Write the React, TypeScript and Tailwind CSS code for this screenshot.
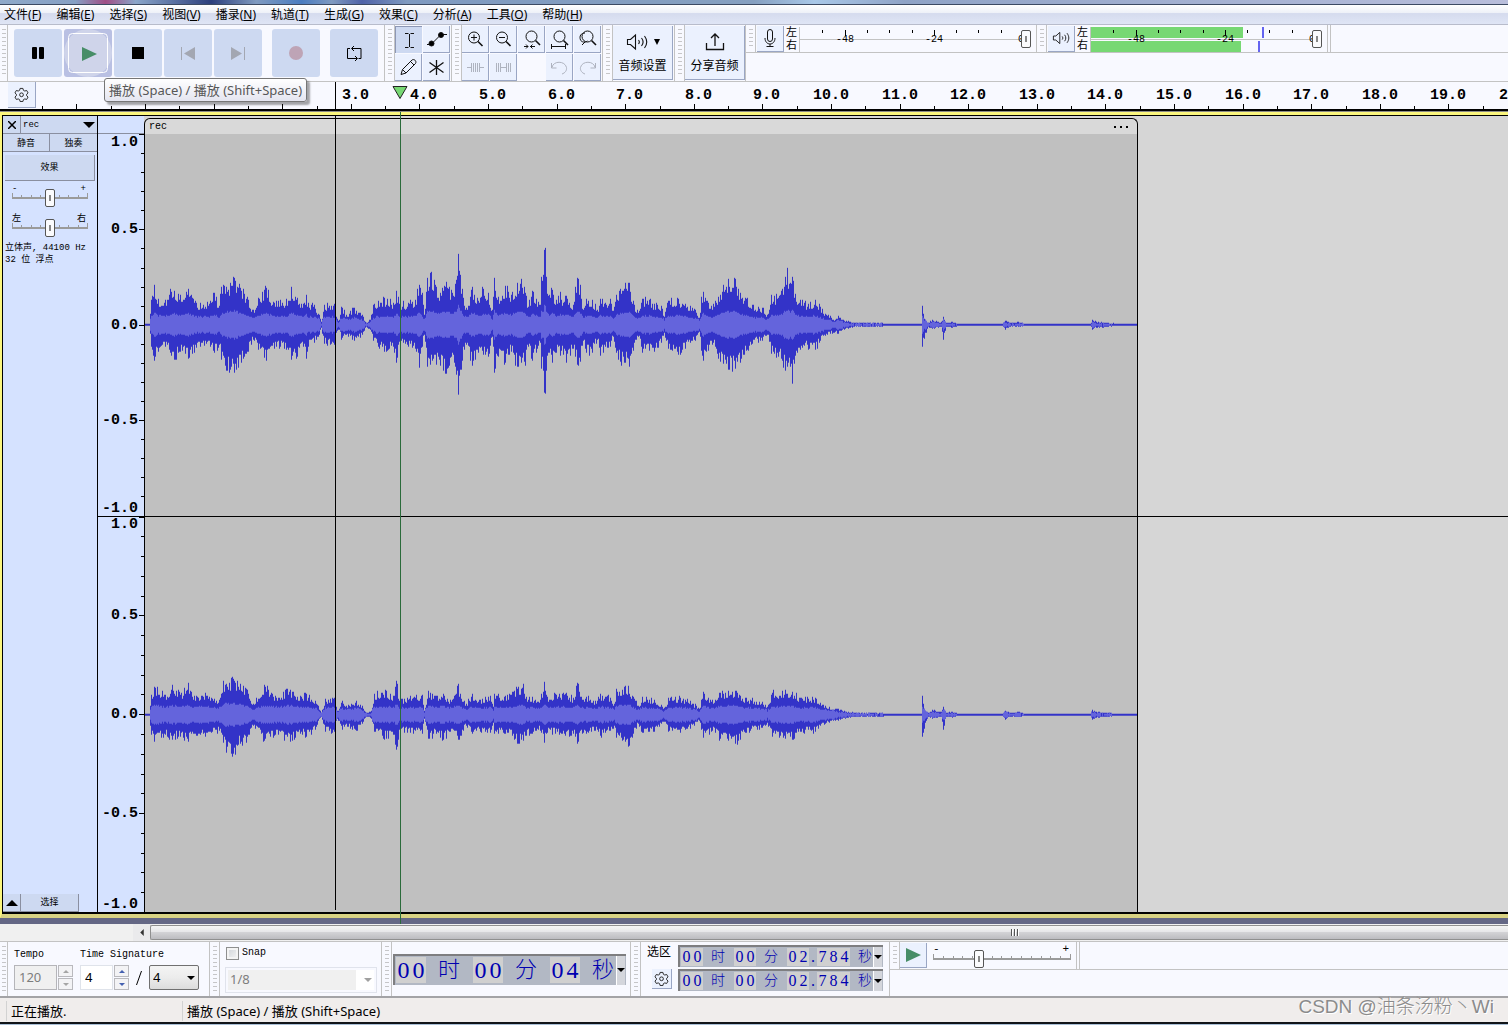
import type { ReactNode } from "react"
import clsx from "clsx"

const PX_PER_SECOND = 68.6
const TIMELINE_START = 145
const CLIP_WIDTH = 992

const MENUS = [
  ["文件", "F"],
  ["编辑", "E"],
  ["选择", "S"],
  ["视图", "V"],
  ["播录", "N"],
  ["轨道", "T"],
  ["生成", "G"],
  ["效果", "C"],
  ["分析", "A"],
  ["工具", "O"],
  ["帮助", "H"],
]

// [x, peak above zero, peak below zero]
type Peak = [number, number, number]

const TAIL: Peak[] = [
  [854, 2, 2], [882, 2, 2], [884, 1, 1], [921, 1, 1], [922, 19, 22], [924, 6, 14],
  [928, 2, 2], [932, 5, 4], [941, 3, 2], [943, 8, 15], [946, 2, 2], [952, 3, 3],
  [958, 1, 1], [1002, 1, 1], [1005, 4, 5], [1010, 2, 2], [1018, 3, 2], [1027, 1, 1],
  [1090, 1, 1], [1092, 5, 5], [1096, 3, 3], [1108, 2, 2], [1116, 1, 1], [1137, 1, 1],
]

const LEFT_PEAKS: Peak[] = [
  [145, 1, 1], [149, 1, 1], [151, 25, 22], [154, 40, 36], [158, 26, 27], [165, 25, 22],
  [170, 36, 28], [174, 34, 35], [180, 30, 27], [188, 36, 34], [194, 22, 28], [200, 22, 22],
  [210, 24, 22], [214, 32, 28], [219, 19, 20], [221, 38, 35], [226, 38, 46], [230, 42, 45],
  [234, 47, 48], [238, 37, 43], [243, 36, 34], [248, 25, 27], [253, 15, 15], [258, 27, 25],
  [266, 37, 36], [274, 22, 24], [280, 25, 22], [288, 24, 25], [291, 38, 35], [297, 27, 32],
  [303, 21, 22], [306, 30, 34], [308, 22, 22], [314, 20, 18], [319, 10, 10], [321, 3, 3],
  [324, 20, 19], [334, 21, 20], [337, 6, 6], [339, 5, 5], [341, 18, 15], [346, 10, 10],
  [354, 17, 16], [362, 10, 10], [366, 2, 2], [370, 5, 5], [373, 20, 16], [378, 24, 22],
  [387, 26, 26], [393, 22, 22], [396, 34, 38], [400, 21, 20], [408, 22, 22], [415, 25, 24],
  [419, 40, 43], [422, 32, 22], [424, 10, 10], [427, 47, 42], [430, 52, 40], [436, 38, 40],
  [440, 32, 41], [446, 43, 49], [452, 32, 28], [456, 45, 50], [458, 71, 70], [460, 50, 45],
  [462, 36, 36], [466, 17, 20], [470, 28, 36], [472, 38, 41], [478, 24, 28], [483, 36, 30],
  [488, 32, 32], [492, 15, 12], [494, 47, 48], [498, 28, 32], [505, 39, 38], [511, 30, 27],
  [517, 42, 42], [521, 46, 38], [525, 32, 41], [528, 18, 22], [532, 34, 36], [540, 20, 18],
  [541, 48, 44], [543, 50, 46], [544, 75, 68], [545, 77, 69], [546, 48, 46], [549, 30, 28],
  [552, 35, 38], [556, 25, 28], [560, 33, 31], [563, 22, 30], [566, 29, 38], [573, 20, 24],
  [575, 38, 32], [577, 47, 40], [580, 40, 37], [583, 15, 16], [586, 26, 28], [592, 25, 28],
  [597, 15, 15], [600, 26, 31], [605, 22, 22], [610, 26, 22], [613, 14, 12], [616, 30, 28],
  [620, 36, 37], [625, 42, 38], [629, 42, 42], [633, 24, 26], [638, 12, 12], [642, 26, 28],
  [649, 25, 26], [654, 21, 27], [661, 19, 18], [664, 8, 8], [668, 24, 24], [678, 26, 30],
  [685, 21, 24], [690, 19, 18], [695, 15, 16], [699, 7, 7], [701, 28, 26], [703, 33, 36],
  [708, 22, 26], [713, 21, 18], [718, 28, 34], [723, 40, 39], [728, 46, 45], [735, 46, 44],
  [740, 32, 38], [747, 27, 25], [752, 20, 19], [762, 17, 16], [767, 10, 10], [771, 30, 29],
  [778, 27, 32], [782, 36, 36], [785, 48, 46], [787, 57, 42], [790, 42, 42], [792, 48, 59],
  [795, 31, 31], [800, 25, 25], [804, 22, 21], [808, 21, 25], [815, 25, 25], [820, 18, 16],
  [825, 11, 11], [830, 9, 9], [833, 5, 8], [838, 9, 9], [842, 5, 5], [848, 4, 4],
  ...TAIL,
]

const RIGHT_PEAKS: Peak[] = [
  [145, 1, 1], [149, 1, 1], [151, 20, 20], [154, 28, 27], [165, 20, 20], [172, 30, 25],
  [180, 20, 22], [188, 32, 27], [194, 19, 19], [205, 22, 22], [219, 15, 16], [223, 34, 28],
  [226, 31, 38], [233, 36, 39], [240, 31, 29], [246, 26, 28], [253, 11, 11], [264, 30, 26],
  [275, 19, 20], [290, 25, 27], [300, 19, 19], [306, 21, 22], [315, 14, 15], [321, 2, 2],
  [325, 16, 17], [334, 17, 17], [337, 4, 4], [342, 14, 15], [348, 10, 12], [356, 14, 16],
  [362, 9, 9], [366, 2, 2], [371, 4, 4], [374, 21, 17], [386, 24, 24], [394, 19, 20],
  [396, 34, 35], [397, 31, 32], [399, 14, 15], [410, 19, 18], [422, 20, 19], [424, 4, 4],
  [428, 24, 24], [436, 19, 19], [443, 21, 25], [450, 15, 17], [458, 31, 25], [460, 21, 21],
  [466, 11, 11], [472, 21, 19], [480, 15, 17], [490, 19, 18], [493, 8, 8], [494, 21, 19],
  [505, 19, 19], [512, 23, 21], [518, 28, 29], [523, 31, 26], [526, 18, 21], [532, 18, 19],
  [540, 15, 16], [544, 33, 28], [547, 18, 18], [555, 21, 19], [565, 21, 21], [573, 17, 19],
  [577, 32, 29], [582, 15, 19], [588, 19, 18], [595, 14, 16], [600, 21, 21], [610, 17, 16],
  [614, 11, 11], [616, 26, 23], [625, 29, 27], [628, 29, 32], [633, 18, 19], [638, 9, 9],
  [642, 18, 18], [654, 15, 17], [664, 7, 7], [668, 17, 17], [680, 17, 18], [690, 14, 14],
  [699, 6, 6], [703, 23, 23], [712, 15, 16], [720, 22, 24], [728, 24, 26], [735, 24, 29],
  [745, 17, 18], [762, 13, 13], [767, 8, 8], [772, 22, 22], [785, 25, 24], [792, 23, 25],
  [800, 17, 17], [815, 17, 17], [825, 9, 9], [838, 6, 6], [848, 3, 3],
  ...TAIL,
]

// small seeded generator so that the wave is the same on every render
function createRandom(seed: number) {
  let state = seed
  return () => {
    state = (state * 1664525 + 1013904223) % 4294967296
    return state / 4294967296
  }
}

function buildWave(peaks: Peak[], middle: number, seed: number) {
  const random = createRandom(seed)
  let peakPath = ""
  let rmsPath = ""
  let i = 0

  for (let x = TIMELINE_START; x < TIMELINE_START + CLIP_WIDTH; x++) {
    while (i < peaks.length - 2 && peaks[i + 1][0] <= x) i++
    const [x0, up0, down0] = peaks[i]
    const [x1, up1, down1] = peaks[i + 1]
    const t = (x - x0) / (x1 - x0)
    const envUp = up0 + (up1 - up0) * t
    const envDown = down0 + (down1 - down0) * t
    const exact = x === x0
    const jitter = () => 0.7 + random() ** 2 * 0.42
    const up = Math.round(exact ? envUp : envUp * jitter())
    const down = Math.round(exact ? envDown : envDown * jitter())
    const left = x - TIMELINE_START + 0.5
    peakPath += `M${left} ${middle - Math.max(up, 1)}V${middle + Math.max(down, 1)}`

    const env = (envUp + envDown) / 2
    const rms = Math.round(Math.min(env * 0.55, 3 + env * 0.23) + random() * 2 - 1)
    if (env > 1.5 && rms > 0) {
      rmsPath += `M${left} ${middle - rms}V${middle + rms}`
    }
  }
  return { peakPath, rmsPath }
}

const LEFT_WAVE = buildWave(LEFT_PEAKS, 191, 7)
const RIGHT_WAVE = buildWave(RIGHT_PEAKS, 198, 29)

function App() {
  return (
    <div className="relative flex h-screen min-h-[600px] flex-col overflow-hidden bg-[#f8f9ff] font-['Noto_Sans','Noto_Sans_CJK_SC',sans-serif] text-xs text-black">
      <div className="h-1 shrink-0 bg-[linear-gradient(90deg,#8fa9c9,#86a0c4_5%,#a04f86_7%,#8aa5c9_9%,#2c3f7c_14%,#7f9ac0_17%,#4a7cc0_20%,#7f9ac0_22%,#4f63a8_24%,#7f9ac0_27%,#86a0c0_50%,#a9c8e8_54%,#8fa3c6_60%,#a9b4d4_85%,#b9bedb)]" />
      <MenuBar />
      <TopToolbar />
      <TimeRuler />
      <TrackArea />
      <div className="h-[6px] shrink-0 bg-[#646785]" />
      <HorizontalScroll />
      <BottomToolbar />
      <StatusBar />
      <div className="h-[3px] shrink-0 border-t-2 border-[#101418] bg-[#a9bfd6]" />
      <div className="absolute right-[14px] bottom-[6px] font-['Liberation_Sans','Noto_Sans_CJK_SC',sans-serif] text-[19px] leading-6 font-light text-[#8b8b8b] [text-shadow:1px_1px_0_#ffffff]">
        CSDN @油条汤粉丶Wi
      </div>
    </div>
  )
}

function MenuBar() {
  return (
    <nav className="flex h-[21px] shrink-0 items-center gap-[15px] border-t border-b border-t-[#3c4a63] border-b-[#b8bccb] bg-[linear-gradient(#ffffff,#eef1f8_40%,#d5dbee_45%,#dfe5f5)] pl-1">
      {MENUS.map(([name, key]) => (
        <button key={key} className="leading-4 whitespace-nowrap">
          {name}(<span className="underline">{key}</span>)
        </button>
      ))}
    </nav>
  )
}

function Grabber({ first = false }: { first?: boolean }) {
  return (
    <div
      className={clsx(
        "flex shrink-0 justify-center border-[#c3c3c3] py-1",
        first ? "w-2 border-r" : "w-[11px] border-x",
      )}
    >
      <div className="w-1 bg-[repeating-linear-gradient(#c6c6c8_0_1px,transparent_1px_4px)]" />
    </div>
  )
}

function TopToolbar() {
  return (
    <div className="flex h-[57px] shrink-0 border-b border-[#c3c3c3]">
      <Grabber first />
      <Transport />
      <Grabber />
      <div className="grid shrink-0 grid-cols-2 gap-px py-px pr-px">
        <ToolButton label="选择工具" active>
          <path d="M9 6.500h3.500M14.500 6.500H18M9 20.500h3.500M14.500 20.500H18M13.500 7v13" />
        </ToolButton>
        <ToolButton label="包络工具">
          <path d="M4 18.500h4L18 8.500h6" />
          <circle cx="8.500" cy="17.500" r="2.500" fill="#000" />
          <circle cx="18" cy="9" r="2.500" fill="#000" />
        </ToolButton>
        <ToolButton label="绘制工具">
          <path d="M6 20.500l1.500-5L17 6c2-1.500 5 1 3.500 3.500L11 19zM15.500 7.500l3.500 3.500M7.500 15.500l3.500 3.500" />
        </ToolButton>
        <ToolButton label="多功能工具">
          <path d="M13.500 6v15M6.500 8.500l14 10M20.500 8.500l-14 10" strokeWidth="1.300" />
        </ToolButton>
      </div>
      <Grabber />
      <div className="grid shrink-0 grid-cols-5 gap-px py-px pr-px">
        <ToolButton label="放大">
          <Magnifier />
          <path d="M9 11.500h6M12 8.500v6" />
        </ToolButton>
        <ToolButton label="缩小">
          <Magnifier />
          <path d="M9 11.500h6" />
        </ToolButton>
        <ToolButton label="适应选区">
          <Magnifier shift />
          <path d="M6 20.500h4M12 20.500h5M8 18.500l2 2-2 2M14.500 18.500l-2 2 2 2" />
        </ToolButton>
        <ToolButton label="适应项目">
          <Magnifier shift />
          <path d="M5.500 20.500h14M5.500 18v5M19.500 18v5" />
        </ToolButton>
        <ToolButton label="缩放切换">
          <Magnifier shift />
          <path d="M11 7c-4 0-6 3-4.500 7 1 2 4 3 7 1M11 16l-3 3" />
        </ToolButton>
        <ToolButton label="修剪音频" disabled>
          <path d="M5 13.500h4M18 13.500h4M9.500 9v9M11.500 9v9M13.500 9v9M15.500 9v9M17.500 9v9" />
        </ToolButton>
        <ToolButton label="静音音频" disabled>
          <path d="M6.500 9v9M8.500 9v9M10.500 9v9M10.500 13.500h6M16.500 9v9M18.500 9v9M20.500 9v9" />
        </ToolButton>
        <div />
        <ToolButton label="撤销" disabled>
          <path d="M6 13.500c1-7 13-7 14.500 0 .5 3-1.500 5.500-4.500 6.500M5.500 9v5h5" />
        </ToolButton>
        <ToolButton label="重做" disabled>
          <path d="M21 13.500c-1-7-13-7-14.500 0-.5 3 1.500 5.500 4.500 6.500M21.500 9v5h-5" />
        </ToolButton>
      </div>
      <Grabber />
      <div className="flex shrink-0 py-px pr-px">
        <LargeButton label="音频设置">
          <SpeakerIcon className="h-5 w-[22px]" />
          <svg viewBox="0 0 6 6" className="ml-[6px] h-[6px] w-[6px]">
            <path d="M0 0h6L3 6z" />
          </svg>
        </LargeButton>
      </div>
      <Grabber />
      <div className="flex shrink-0 py-px">
        <LargeButton label="分享音频">
          <svg viewBox="0 0 20 20" className="h-5 w-5" fill="none" stroke="#111" strokeWidth="1.300">
            <path d="M1.500 11v6.500h17V11M10 14V2M6 6l4-4 4 4" />
          </svg>
        </LargeButton>
      </div>
      <div className="flex min-w-0 flex-1 flex-col border-l border-[#c3c3c3]">
        <div className="-ml-px flex h-[28px] border-b border-[#c3c3c3]">
          <Grabber />
          <Meter label="录制电平">
            <svg viewBox="0 0 12 18" className="h-[18px] w-3" fill="none" stroke="#111">
              <rect x="3.500" y="0.500" width="5" height="12" rx="2.500" />
              <path d="M1 9c0 8 10 8 10 0M6 15v2M2.500 17.500h7" />
            </svg>
          </Meter>
          <Grabber />
          <Meter label="播放电平" levels={[152, 150]} holds={[171, 167]}>
            <SpeakerIcon className="h-4 w-[18px]" />
          </Meter>
          <div className="border-x border-[#c3c3c3] pl-[2px]" />
        </div>
      </div>
    </div>
  )
}

function Transport() {
  return (
    <div className="flex shrink-0 gap-[2px] py-1 pr-[6px] pl-[6px]">
      <TransportButton label="暂停">
        <rect x="18" y="18" width="5" height="12" rx="1" />
        <rect x="25" y="18" width="5" height="12" rx="1" />
      </TransportButton>
      <button
        aria-label="播放"
        className="relative h-12 w-12 overflow-hidden rounded-[3px] bg-[#b9c0e3]"
      >
        <svg viewBox="0 0 48 48" className="h-12 w-12">
          <circle cx="24" cy="24" r="24" fill="#cfd4ea" />
          <rect x="4.500" y="4.500" width="39" height="39" rx="4" fill="none" stroke="#fff" />
          <path d="M18 18v14l15-7z" fill="#478d67" />
        </svg>
      </button>
      <TransportButton label="停止">
        <rect x="18" y="18" width="12" height="12" />
      </TransportButton>
      <TransportButton label="跳至开头" disabled>
        <path d="M17 18h1v13h-1zM31 18v13l-11-6.500z" fill="#a3a7b2" />
      </TransportButton>
      <TransportButton label="跳至末尾" disabled>
        <path d="M30 18h1v13h-1zM17 18v13l11-6.500z" fill="#a3a7b2" />
      </TransportButton>
      <div className="ml-2 flex gap-[10px]">
        <TransportButton label="录制" disabled>
          <circle cx="24" cy="24" r="7" fill="#bea4b6" />
        </TransportButton>
        <TransportButton label="循环">
          <path
            d="M20 19.500h-2.500v10H27M28.500 29.500h2.500v-10h-9M24 17l-2.500 2.500L24 22M25 27l2.500 2.500L25 32"
            fill="none"
            stroke="#000"
          />
        </TransportButton>
      </div>
    </div>
  )
}

function TransportButton({
  label,
  disabled,
  children,
}: {
  label: string
  disabled?: boolean
  children: ReactNode
}) {
  return (
    <button
      aria-label={label}
      disabled={disabled}
      className="h-12 w-12 rounded-[3px] bg-[#cdd9f1]"
    >
      <svg viewBox="0 0 48 48" className="h-12 w-12">
        {children}
      </svg>
    </button>
  )
}

function ToolButton({
  label,
  active,
  disabled,
  children,
}: {
  label: string
  active?: boolean
  disabled?: boolean
  children: ReactNode
}) {
  return (
    <button
      aria-label={label}
      disabled={disabled}
      className={clsx(
        "h-[27px] w-[27px] overflow-hidden",
        active
          ? "border-t border-l border-[#8d97b5] bg-[#cdd9f1]"
          : "border-r border-b border-[#9aa6c4] bg-[#ebf1fe]",
      )}
    >
      <svg
        viewBox="0 0 27 27"
        className="h-[27px] w-[27px] max-w-none"
        fill="none"
        stroke={disabled ? "#aeb3bf" : "#111"}
      >
        {children}
      </svg>
    </button>
  )
}

function Magnifier({ shift = false }: { shift?: boolean }) {
  return (
    <g transform={shift ? "translate(1.500 -1)" : undefined}>
      <circle cx="12" cy="11.500" r="5.500" />
      <path d="M16 15.500l4.500 4.500" strokeWidth="1.600" />
    </g>
  )
}

function LargeButton({ label, children }: { label: string; children: ReactNode }) {
  return (
    <button className="flex w-[60px] flex-col items-center border-r border-b border-[#9aa6c4] bg-[#ebf1fe] pt-1">
      <span className="flex h-6 items-center">{children}</span>
      <span className="mt-1 leading-4 whitespace-nowrap">{label}</span>
    </button>
  )
}

function SpeakerIcon({ className }: { className: string }) {
  return (
    <svg viewBox="0 0 22 20" className={className} fill="none" stroke="#111" strokeWidth="1.100">
      <path d="M1.500 7.500h3l5-4.500v14l-5-4.500h-3zM12.500 8c1 1.200 1 2.800 0 4M15.500 6c2 2.500 2 5.500 0 8M18.500 4c3 4 3 8 0 12" />
    </svg>
  )
}

function Meter({
  label,
  levels = [0, 0],
  holds,
  children,
}: {
  label: string
  levels?: number[]
  holds?: number[]
  children: ReactNode
}) {
  return (
    <div className="flex pr-[5px] pl-px font-['Liberation_Sans','Noto_Sans_CJK_SC',sans-serif]">
      <button
        aria-label={label}
        className="flex h-[26px] w-[27px] items-center justify-center self-center border-r border-b border-[#9aa6c4] bg-[#ebf1fe]"
      >
        {children}
      </button>
      <div className="ml-[2px] w-[13px] pt-px text-[11px] leading-[13px]">
        <div>左</div>
        <div>右</div>
      </div>
      <div className="relative mt-[2px] flex h-[25px] w-[232px] flex-col gap-[3px] border-l border-[#c3c3c3]">
        {levels.map((level, index) => (
          <div key={index} className="relative h-[11px]">
            <div className="h-full bg-[#77d873]" style={{ width: level }} />
            {holds && (
              <div
                className="absolute top-0 h-full w-[2px] bg-[#6464f0]"
                style={{ left: holds[index] }}
              />
            )}
          </div>
        ))}
        <div className="absolute inset-x-0 top-3 h-px bg-[#c3c3c3]" />
        {[1, 2, 3, 4, 5, 6, 7, 8, 9].map((step) => (
          <div
            key={step}
            className={clsx("absolute top-[3px] w-px bg-black", step % 4 === 2 ? "h-[6px]" : "h-[3px]")}
            style={{ left: Math.round(step * 22.3) }}
          />
        ))}
        {[-48, -24, 0].map((db) => (
          <span
            key={db}
            className="absolute top-[7px] w-8 -translate-x-1/2 text-center font-['Liberation_Mono',monospace] text-[10px] leading-3"
            style={{ left: Math.min(Math.round((db + 60) * 3.72), 221) }}
          >
            {db}
          </span>
        ))}
        <input
          type="range"
          aria-label={label}
          defaultValue={100}
          className="absolute inset-x-0 top-[3px] h-[18px] appearance-none bg-transparent [&::-webkit-slider-thumb]:h-[18px] [&::-webkit-slider-thumb]:w-[10px] [&::-webkit-slider-thumb]:appearance-none [&::-webkit-slider-thumb]:rounded-[2px] [&::-webkit-slider-thumb]:border [&::-webkit-slider-thumb]:border-[#555] [&::-webkit-slider-thumb]:[background:linear-gradient(#888,#888)_center/2px_6px_no-repeat,#fbfbfd]"
        />
      </div>
    </div>
  )
}

function GearIcon({ className }: { className: string }) {
  return (
    <svg viewBox="0 0 16 16" className={className} fill="none" stroke="#222">
      <path d="M6.500 1.500h3l.5 2 1.500.8 2-.6 1.500 2.600-1.500 1.400v1.600l1.500 1.400-1.500 2.600-2-.6-1.500.8-.5 2h-3l-.5-2-1.500-.8-2 .6L1 10.700l1.500-1.400V7.700L1 6.300l1.500-2.600 2 .6L6 3.500z" />
      <circle cx="8" cy="8.300" r="2" />
    </svg>
  )
}

function TimeRuler() {
  const halfSeconds = Array.from({ length: 43 }, (_, i) => (i - 3) / 2)
  const seconds = Array.from({ length: 18 }, (_, i) => i + 3)

  return (
    <div className="relative h-[30px] shrink-0 border-b border-[#8a8a8a]">
      <button
        aria-label="时间轴选项"
        className="ml-2 flex h-[26px] w-7 items-center justify-center border-r border-b border-[#9aa6c4] bg-[#ebf1fe]"
      >
        <GearIcon className="h-[15px] w-[15px]" />
      </button>
      <div className="absolute inset-0 overflow-hidden border-b-2 border-black">
        {halfSeconds.map((time) => (
          <div
            key={time}
            className={clsx(
              "absolute bottom-0 w-px bg-black",
              Number.isInteger(time) ? "h-[5px]" : "h-[3px]",
            )}
            style={{ left: Math.round(TIMELINE_START + time * PX_PER_SECOND) }}
          />
        ))}
        {seconds.map((time) => (
          <span
            key={time}
            className="absolute top-[5px] w-9 -translate-x-1/2 text-right font-['Liberation_Mono',monospace] text-[15px] leading-[18px] font-bold"
            style={{ left: Math.round(TIMELINE_START + time * PX_PER_SECOND) }}
          >
            {time.toFixed(1)}
          </span>
        ))}
        <div className="absolute inset-y-0 left-[335px] w-px bg-black" />
        <svg viewBox="0 0 16 14" className="absolute top-1 left-[392px] h-[14px] w-4">
          <path d="M1 .5h14l-7 12z" fill="#77d873" stroke="#222" />
        </svg>
      </div>
      <div
        role="tooltip"
        className="absolute -top-1 left-[104px] z-10 rounded-[3px] border border-[#767676] bg-[linear-gradient(#ffffff,#e4e5f0)] px-1 py-[2px] text-[13px] leading-[18px] whitespace-nowrap text-[#575757] shadow-[3px_3px_2px_rgba(0,0,0,0.35)]"
      >
        播放 (Space) / 播放 (Shift+Space)
      </div>
    </div>
  )
}

function TrackArea() {
  return (
    <div className="relative flex min-h-0 flex-1 flex-col border-t-[3px] border-b-4 border-l-2 border-t-[#fbf67e] border-b-[#d8d283] border-l-[#fbf67e]">
      <div className="flex min-h-0 flex-1 border-t border-b-2 border-black">
        <TrackPanel />
        <div className="flex w-[47px] shrink-0 flex-col border-l border-black bg-[#d5e2ff]">
          <div className="h-[18px] shrink-0 border-b border-[#8a8fa0]" />
          <AmplitudeScale className="flex-[382]" />
          <div className="h-px shrink-0 bg-black" />
          <AmplitudeScale className="flex-[396]" />
        </div>
        <div className="relative flex min-w-0 flex-1 flex-col bg-[#d6d6d6] pt-[2px]">
          <div className="flex h-4 w-[994px] shrink-0 items-center justify-between rounded-t-md border border-b-0 border-black bg-[#d9d9d9] pr-2 pl-1 font-['Liberation_Mono',monospace] text-[10px] leading-3">
            <span>rec</span>
            <svg viewBox="0 0 16 2" className="h-[2px] w-4">
              <path d="M1 0h2v2H1zM7 0h2v2H7zM13 0h2v2h-2z" />
            </svg>
          </div>
          <Channel wave={LEFT_WAVE} height={382} className="flex-[382]" />
          <div className="h-px shrink-0 bg-black" />
          <Channel wave={RIGHT_WAVE} height={396} className="flex-[396]" />
          <div className="absolute top-0 bottom-[2px] left-[191px] w-px bg-black" />
        </div>
      </div>
      <div className="absolute -top-[3px] -bottom-[10px] left-[398px] w-px bg-[#2a6a3a]" />
    </div>
  )
}

function Channel({
  wave,
  height,
  className,
}: {
  wave: { peakPath: string; rmsPath: string }
  height: number
  className: string
}) {
  return (
    <div
      className={clsx(
        "min-h-0 w-[994px] overflow-hidden border-x border-black bg-[#c0c0c0]",
        className,
      )}
    >
      <svg
        viewBox={`0 0 ${CLIP_WIDTH} ${height}`}
        preserveAspectRatio="none"
        shapeRendering="crispEdges"
        className="block h-full w-full"
      >
        <path d={wave.peakPath} stroke="#3232c8" />
        <path d={wave.rmsPath} stroke="#6464dc" />
      </svg>
    </div>
  )
}

function AmplitudeScale({ className }: { className: string }) {
  const labels = [
    { text: "1.0", top: 2 },
    { text: "0.5", top: 25 },
    { text: "0.0", top: 50 },
    { text: "-0.5", top: 75 },
    { text: "-1.0", top: 98 },
  ]

  return (
    <div className={clsx("relative min-h-0", className)}>
      {Array.from({ length: 21 }, (_, i) => (
        <div
          key={i}
          className={clsx("absolute right-0 h-px bg-black", i % 5 ? "w-[3px]" : "w-[5px]")}
          style={{ top: `${i * 5}%` }}
        />
      ))}
      {labels.map(({ text, top }) => (
        <span
          key={text}
          className="absolute right-[6px] -translate-y-1/2 pt-[2px] font-['Liberation_Mono',monospace] text-[15px] leading-[18px] font-bold"
          style={{ top: `${top}%` }}
        >
          {text}
        </span>
      ))}
    </div>
  )
}

function TrackPanel() {
  return (
    <div className="flex w-[95px] shrink-0 flex-col border-l border-black bg-[#d5e2ff] font-['Liberation_Mono','Noto_Sans_CJK_SC',monospace] text-[9px] leading-3">
      <div className="flex h-[18px] border-b border-[#8a8fa0] bg-[#cdd9f1]">
        <button aria-label="关闭" className="flex w-[18px] items-center justify-center border-r border-[#8a8fa0]">
          <svg viewBox="0 0 8 8" className="h-2 w-2" stroke="#000" strokeWidth="1.500">
            <path d="M0 0l8 8M8 0L0 8" />
          </svg>
        </button>
        <button className="flex flex-1 items-center justify-between pr-[2px] pl-[2px]">
          <span>rec</span>
          <svg viewBox="0 0 12 6" className="h-[6px] w-3">
            <path d="M0 0h12L6 6z" />
          </svg>
        </button>
      </div>
      <div className="grid h-[18px] grid-cols-2 border-b border-[#8a8fa0] bg-[#cdd9f1]">
        <button className="border-r border-[#8a8fa0] pt-[2px]">静音</button>
        <button className="pt-[2px]">独奏</button>
      </div>
      <button className="mx-[2px] mt-[3px] h-[26px] border-r border-b border-[#8a8fa0] bg-[#cdd9f1] pt-px">
        效果
      </button>
      <PanelSlider label="增益" left="-" right="+" />
      <PanelSlider label="声像" left="左" right="右" />
      <div className="mt-px pl-[2px] whitespace-nowrap">
        <div>立体声, 44100 Hz</div>
        <div>32 位 浮点</div>
      </div>
      <div className="mt-auto flex h-[18px]">
        <button aria-label="折叠" className="flex w-[18px] items-center justify-center border-r border-b border-[#8a8fa0] bg-[#cdd9f1]">
          <svg viewBox="0 0 12 6" className="h-[6px] w-3">
            <path d="M0 6h12L6 0z" />
          </svg>
        </button>
        <button className="w-[58px] border-r border-b border-[#8a8fa0] bg-[#cdd9f1] pt-px">选择</button>
      </div>
    </div>
  )
}

function PanelSlider({ label, left, right }: { label: string; left: string; right: string }) {
  return (
    <div className="h-[30px] pr-[9px] pl-[9px]">
      <div className="flex justify-between pt-[2px] pr-[2px]">
        <span>{left}</span>
        <span>{right}</span>
      </div>
      <Slider label={label} value={50} ticks={9} />
    </div>
  )
}

function Slider({ label, value, ticks }: { label: string; value: number; ticks: number }) {
  return (
    <div className="relative -mt-[6px] h-[18px]">
      <div className="flex h-[10px] items-end justify-between border-b-2 border-[#9a9a9a]">
        {Array.from({ length: ticks }, (_, i) => (
          <div
            key={i}
            className={clsx("w-px bg-[#9a9a9a]", i === 0 || i === ticks - 1 ? "h-1" : "h-[2px]")}
          />
        ))}
      </div>
      <input
        type="range"
        aria-label={label}
        defaultValue={value}
        className="absolute inset-0 h-[18px] w-full appearance-none bg-transparent [&::-webkit-slider-thumb]:h-[18px] [&::-webkit-slider-thumb]:w-[10px] [&::-webkit-slider-thumb]:appearance-none [&::-webkit-slider-thumb]:rounded-[2px] [&::-webkit-slider-thumb]:border [&::-webkit-slider-thumb]:border-[#555] [&::-webkit-slider-thumb]:[background:linear-gradient(#888,#888)_center/2px_6px_no-repeat,#fbfbfd]"
      />
    </div>
  )
}

function HorizontalScroll() {
  return (
    <div className="flex h-[17px] shrink-0 bg-[#f0f0f0]">
      <button aria-label="向左滚动" className="ml-[133px] flex w-[17px] items-center justify-center bg-[#eaeaec]">
        <svg viewBox="0 0 4 8" className="h-[7px] w-1">
          <path d="M4 0v8L0 4z" fill="#333" />
        </svg>
      </button>
      <div className="my-px flex flex-1 justify-center rounded-l-[2px] border border-r-0 border-[#8f8f8f] bg-[linear-gradient(#f5f5f5,#e6e6e8_45%,#d2d2d5_50%,#bcbcc0)] pr-0 pl-[371px]">
        <div className="mt-[3px] h-[7px] w-[9px] bg-[repeating-linear-gradient(90deg,#555_0_1px,#fff_1px_2px,transparent_2px_3px)]" />
      </div>
    </div>
  )
}

function Spinner({ disabled }: { disabled?: boolean }) {
  const fill = disabled ? "#a5a5a5" : "#4460b0"
  return (
    <div className="flex h-[25px] w-[15px] flex-col gap-px">
      {["M0 3h6L3 0z", "M0 0h6L3 3z"].map((d, i) => (
        <button
          key={d}
          aria-label={i ? "减小" : "增大"}
          disabled={disabled}
          className="flex flex-1 items-center justify-center border border-[#b9b9bd] bg-[#f3f3f5]"
        >
          <svg viewBox="0 0 6 3" className="h-[3px] w-[6px]">
            <path d={d} fill={fill} />
          </svg>
        </button>
      ))}
    </div>
  )
}

function BottomToolbar() {
  return (
    <div className="flex h-[57px] shrink-0 border-t border-b-2 border-t-[#c3c3c3] border-b-[#a3a3a6]">
      <Grabber first />
      <div className="flex shrink-0 pt-[5px] pr-[10px] pl-[6px]">
        <div className="w-[66px]">
          <label htmlFor="tempo" className="block font-['Liberation_Mono',monospace] text-[10px] leading-4">
            Tempo
          </label>
          <div className="mt-[2px] flex gap-px">
            <input
              id="tempo"
              disabled
              defaultValue="120"
              className="h-[25px] w-[43px] border border-[#b5b5b9] bg-[#f0f0f0] px-1 pb-[2px] text-[13px] text-[#7d7d7d]"
            />
            <Spinner disabled />
          </div>
        </div>
        <div>
          <label htmlFor="beats" className="block font-['Liberation_Mono',monospace] text-[10px] leading-4">
            Time Signature
          </label>
          <div className="mt-[2px] flex gap-px">
            <input
              id="beats"
              defaultValue="4"
              className="h-[25px] w-[33px] border border-[#dfe3ea] bg-white px-1 pb-[2px] text-[13px]"
            />
            <Spinner />
            <svg viewBox="0 0 6 14" className="mx-[6px] mt-[6px] h-[14px] w-[6px]" stroke="#000">
              <path d="M5.500 0L.5 14" />
            </svg>
            <div className="relative">
              <select
                aria-label="拍号单位"
                className="h-[25px] w-[50px] appearance-none rounded-[2px] border border-[#707070] bg-[linear-gradient(#f4f4f4,#ececec_50%,#dcdcdc)] pl-[3px] text-[13px]"
              >
                <option>4</option>
              </select>
              <svg viewBox="0 0 8 4" className="pointer-events-none absolute top-[11px] right-1 h-1 w-2">
                <path d="M0 0h8L4 4z" />
              </svg>
            </div>
          </div>
        </div>
      </div>
      <Grabber />
      <div className="shrink-0 pt-[3px] pr-[5px] pl-[6px]">
        <label className="flex h-4 items-center gap-[3px] font-['Liberation_Mono',monospace] text-[10px] leading-4">
          <input
            type="checkbox"
            className="h-[13px] w-[13px] appearance-none border border-[#8e8f8f] bg-[linear-gradient(135deg,#cfd3d8,#f6f6f6)] shadow-[inset_0_0_0_2px_#f4f4f4]"
          />
          Snap
        </label>
        <div className="relative mt-[7px]">
          <select
            aria-label="吸附单位"
            disabled
            className="h-6 w-[150px] appearance-none border-2 border-[#f8f9ff] bg-[#f0f0f0] bg-clip-padding pl-[2px] text-[13px] text-[#7d7d7d] opacity-100 shadow-[inset_-18px_0_0_#ffffff,0_0_0_1px_#e0e3ec]"
          >
            <option>1/8</option>
          </select>
          <svg viewBox="0 0 8 4" className="pointer-events-none absolute top-[10px] right-1 h-1 w-2">
            <path d="M0 0h8L4 4z" fill="#a0a0a0" />
          </svg>
        </div>
      </div>
      <Grabber />
      <div className="flex shrink-0 items-center px-px pr-1">
        <BigTime />
      </div>
      <Grabber />
      <div className="flex shrink-0 pt-[2px] pr-[6px] pl-[6px]">
        <div className="flex w-[31px] flex-col">
          <span className="leading-4">选区</span>
          <button
            aria-label="选区选项"
            className="mt-[9px] ml-[5px] flex h-5 w-5 items-center justify-center border-r border-b border-[#9aa6c4] bg-[#ebf1fe]"
          >
            <GearIcon className="h-[15px] w-[15px]" />
          </button>
        </div>
        <div className="flex flex-col gap-[2px] pt-px">
          <SmallTime label="选区开始" />
          <SmallTime label="选区结束" />
        </div>
      </div>
      <div className="min-w-0 flex-1 border-l border-[#c3c3c3]">
        <div className="-ml-px flex h-7 border-b border-[#c3c3c3]">
          <Grabber />
          <button
            aria-label="以指定速度播放"
            className="my-px flex w-[27px] items-center justify-center border-r border-b border-[#9aa6c4] bg-[#ebf1fe]"
          >
            <svg viewBox="0 0 15 14" className="h-[14px] w-[15px]">
              <path d="M0 0v14l15-7z" fill="#478d67" />
            </svg>
          </button>
          <div className="w-[150px] border-r border-[#c3c3c3] pr-[5px] pl-[6px] font-['Liberation_Mono',monospace] text-[11px] leading-[14px]">
            <div className="flex justify-between pr-[2px]">
              <span>-</span>
              <span>+</span>
            </div>
            <Slider label="播放速度" value={32} ticks={15} />
          </div>
          <div className="w-[3px] border-r border-[#c3c3c3]" />
        </div>
      </div>
    </div>
  )
}

function BigTime() {
  return (
    <div
      role="group"
      aria-label="播放位置"
      className="flex h-[31px] items-center border-t-2 border-l-2 border-[#7e7e80] bg-[#b2b8c4] pr-px pl-px font-['Liberation_Serif','Noto_Sans_CJK_SC',serif] text-2xl leading-[26px] text-[#0000b0]"
    >
      {[
        ["00", "时"],
        ["00", "分"],
        ["04", "秒"],
      ].map(([digits, unit]) => (
        <div key={unit} className="flex">
          {digits.split("").map((digit, index) => (
            <span key={index} className="w-[15px] bg-[#d0d0d0] text-center">
              {digit}
            </span>
          ))}
          <span
            className={clsx("pl-3 text-[22px] font-light", unit === "秒" ? "w-[36px]" : "w-[47px]")}
          >
            {unit}
          </span>
        </div>
      ))}
      <TimeArrow />
    </div>
  )
}

function TimeArrow() {
  return (
    <button aria-label="时间格式" className="flex h-full w-[9px] items-center justify-center border-l border-white bg-[#d4d6dc]">
      <svg viewBox="0 0 8 4" className="h-1 w-2 shrink-0">
        <path d="M0 0h8L4 4z" />
      </svg>
    </button>
  )
}

function SmallTime({ label }: { label: string }) {
  return (
    <div
      role="group"
      aria-label={label}
      className="flex h-[22px] items-center border-t-2 border-l-2 border-[#7e7e80] bg-[#b2b8c4] pr-px pl-px font-['Liberation_Serif','Noto_Sans_CJK_SC',serif] text-base leading-[18px] text-[#0000b0]"
    >
      {[
        ["00", "时"],
        ["00", "分"],
        ["02.784", "秒"],
      ].map(([digits, unit]) => (
        <div key={unit} className="flex">
          {digits.split("").map((digit, index) => (
            <span
              key={index}
              className={clsx("text-center", digit === "." ? "w-2" : "w-[11px] bg-[#d0d0d0]")}
            >
              {digit}
            </span>
          ))}
          <span
            className={clsx("pl-2 text-sm leading-[18px] font-light", unit === "秒" ? "w-[23px]" : "w-[31px]")}
          >
            {unit}
          </span>
        </div>
      ))}
      <TimeArrow />
    </div>
  )
}

function StatusBar() {
  return (
    <footer className="flex h-6 shrink-0 items-center bg-[#f0edec] pt-[2px] pl-[6px] leading-5">
      <div className="w-44 border-l border-[#d2d2d2] pl-1 text-[13px]">正在播放.</div>
      <div className="border-l border-[#d2d2d2] pl-1 text-[13px]">播放 (Space) / 播放 (Shift+Space)</div>
    </footer>
  )
}

export default App
